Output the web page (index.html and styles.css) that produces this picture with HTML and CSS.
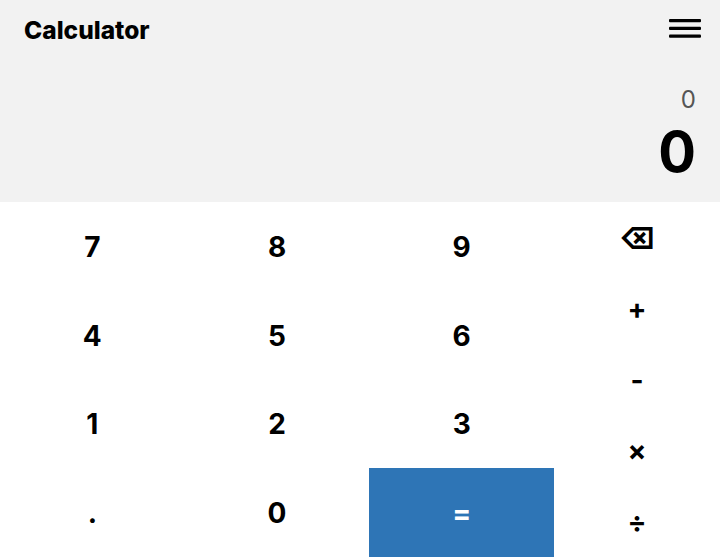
FILE: index.html
```html
<!DOCTYPE html>
<html lang="en">
<head>
    <meta charset="UTF-8">
    <meta name="viewport" content="width=device-width, initial-scale=1.0">
    <title>Calculator</title>
    <link rel="stylesheet" href="styles.css">
</head>
<body>
    <div class="calculator">
        <!-- Header and display -->
        <div class="calc-top">
            <div class="calc-header">
                <div class="calc-title">Calculator</div>
                <button class="menu-button" aria-label="Menu">
                    <svg width="32" height="19" viewBox="0 0 32 19" fill="#000">
                        <rect y="0" width="32" height="3.3" rx="1"/>
                        <rect y="7.7" width="32" height="3.3" rx="1"/>
                        <rect y="15.4" width="32" height="3.3" rx="1"/>
                    </svg>
                </button>
            </div>
            <div class="calc-display">
                <div class="calc-history">0</div>
                <div class="calc-result">0</div>
            </div>
        </div>

        <!-- Keypad -->
        <div class="calc-keys">
            <div class="digit-keys">
                <button class="key">7</button>
                <button class="key">8</button>
                <button class="key">9</button>
                <button class="key">4</button>
                <button class="key">5</button>
                <button class="key">6</button>
                <button class="key">1</button>
                <button class="key">2</button>
                <button class="key">3</button>
                <button class="key">.</button>
                <button class="key">0</button>
                <button class="key key-equals">=</button>
            </div>
            <div class="operator-keys">
                <button class="key key-back">⌫</button>
                <button class="key">+</button>
                <button class="key">-</button>
                <button class="key">×</button>
                <button class="key">÷</button>
            </div>
        </div>
    </div>
</body>
</html>
```

FILE: styles.css
```css
* {
    box-sizing: border-box;
}

body {
    margin: 0;
    font-family: "Inter", "Liberation Sans", sans-serif;
    background: #fff;
    color: #000;
}

.calculator {
    display: flex;
    flex-direction: column;
    height: 557px;
    overflow: hidden;
}

/* Header and display */
.calc-top {
    flex-shrink: 0;
    height: 202px;
    background: #f2f2f2;
    padding: 0 24px;
}

.calc-header {
    display: flex;
    justify-content: space-between;
    align-items: center;
    height: 60px;
}

.calc-title {
    font-size: 24.5px;
    font-weight: 800;
}

.menu-button {
    display: flex;
    width: 32px;
    margin-right: -5px;
    margin-top: -3px;
    padding: 0;
    border: none;
    background: none;
}

.calc-display {
    text-align: right;
}

.calc-history {
    margin-top: 25px;
    font-size: 24px;
    line-height: 30px;
    color: #555;
}

.calc-result {
    margin-top: 3px;
    font-size: 56px;
    font-weight: 700;
    line-height: 68px;
}

/* Keypad */
.calc-keys {
    display: grid;
    grid-template-columns: 554px 166px;
    flex: 1;
}

.digit-keys {
    display: grid;
    grid-template-columns: repeat(3, 1fr);
    grid-template-rows: repeat(4, 1fr);
}

.digit-keys .key {
    padding-top: 1px;
}

.operator-keys {
    display: grid;
    grid-template-rows: repeat(5, 71px);
}

.key {
    display: flex;
    justify-content: center;
    align-items: center;
    padding: 0;
    border: none;
    background: #fff;
    color: #000;
    font-family: inherit;
    font-size: 28px;
    font-weight: 700;
}

.key-equals {
    background: #2e75b6;
    color: #fff;
}

.key-back {
    font-size: 30px;
}
```
